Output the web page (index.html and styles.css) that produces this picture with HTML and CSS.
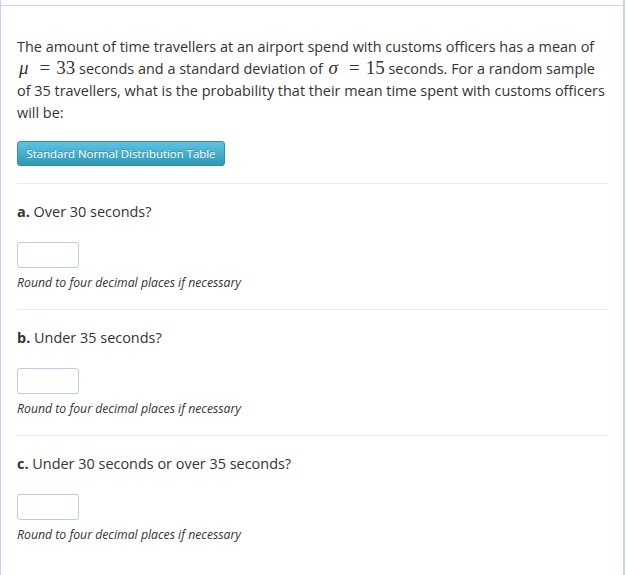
FILE: index.html
```html
<!DOCTYPE html>
<html>
<head>
<meta charset="utf-8">
<link rel="stylesheet" href="styles.css">
</head>
<body>
<div class="frame">
  <div class="panel">
    <p class="intro">The amount of time travellers at an airport spend with customs officers has a mean of <span class="math"><i>μ</i><span class="eq">=</span>33</span> seconds and a standard deviation of <span class="math"><i>σ</i><span class="eq">=</span>15</span> seconds. For a random sample of 35 travellers, what is the probability that their mean time spent with customs officers will be:</p>
    <div class="btn-row"><button class="btn">Standard Normal Distribution Table</button></div>

    <div class="part">
      <p class="q"><b>a.</b> Over 30 seconds?</p>
      <input class="answer" type="text">
      <p class="hint">Round to four decimal places if necessary</p>
    </div>
    <div class="part">
      <p class="q"><b>b.</b> Under 35 seconds?</p>
      <input class="answer" type="text">
      <p class="hint">Round to four decimal places if necessary</p>
    </div>
    <div class="part">
      <p class="q"><b>c.</b> Under 30 seconds or over 35 seconds?</p>
      <input class="answer" type="text">
      <p class="hint">Round to four decimal places if necessary</p>
    </div>
  </div>
</div>
</body>
</html>
```
FILE: styles.css
```css
html, body {
  margin: 0;
  padding: 0;
  background: #fff;
}
body {
  font-family: "Open Sans", "Liberation Sans", sans-serif;
  color: #333;
}
.frame {
  width: 625px;
  height: 575px;
  border-left: 1px solid #c5d6ec;
  border-right: 2px solid #c5d6ec;
  box-sizing: border-box;
  padding-top: 5px;
  overflow: hidden;
}
.panel {
  border-top: 1px solid #c5d6ec;
  padding: 30px 15px 0 16px;
}
.intro {
  margin: 0;
  font-size: 14.45px;
  line-height: 22px;
}
.math {
  font-family: "Liberation Serif", "DejaVu Serif", serif;
  font-size: 19px;
  line-height: 1;
  padding-left: 2px;
}
.math i {
  font-style: italic;
}
.eq {
  margin: 0 6px 0 11px;
}
.btn-row {
  margin-top: 17px;
  margin-bottom: 17px;
}
.btn {
  display: block;
  font-family: "Open Sans", "Liberation Sans", sans-serif;
  font-size: 11.4px;
  color: #fff;
  width: 208px;
  height: 25px;
  padding: 0;
  border: 1px solid #2f8fae;
  border-radius: 3px;
  background: linear-gradient(#5ec3e1, #2f97b6);
  text-shadow: 0 -1px 0 rgba(0,0,0,0.2);
}
.part {
  border-top: 1px solid #eaeaea;
  padding-top: 17px;
  padding-bottom: 17px;
}
.q {
  margin: 0;
  font-size: 14.45px;
  line-height: 22px;
}
.q b {
  font-weight: 700;
}
.answer {
  display: block;
  margin-top: 19px;
  width: 62px;
  height: 26px;
  box-sizing: border-box;
  border: 1px solid #b9cdea;
  border-radius: 3px;
}
.hint {
  margin: 6px 0 0;
  font-size: 12.25px;
  line-height: 18px;
  font-style: italic;
}
```
